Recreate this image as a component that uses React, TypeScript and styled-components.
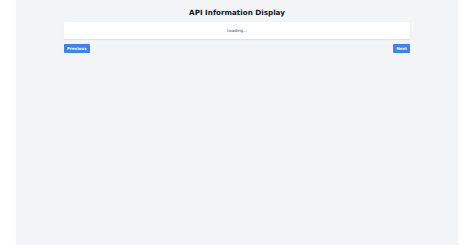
import React, { useState } from 'react';
import styled, { createGlobalStyle } from 'styled-components';

const GlobalStyle = createGlobalStyle`
  body {
    margin: 0;
    background: #ffffff;
    font-family: "DejaVu Sans", sans-serif;
  }
`;

const Page = styled.div`
  width: 442px;
  min-height: 245px;
  margin: 0 auto;
  box-sizing: border-box;
  padding: 7px 48px;
  background: #f3f4f6;
  box-shadow: 0 1px 2px rgba(0, 0, 0, 0.04);
`;

const Title = styled.h1`
  margin: 0 0 5px;
  font-size: 7.2px;
  line-height: 9px;
  padding-top: 1px;
  font-weight: 700;
  text-align: center;
  color: #111827;
`;

const Card = styled.div`
  background: #ffffff;
  border-radius: 1px;
  box-shadow: 0 1px 1px rgba(0, 0, 0, 0.08);
  height: 17px;
  display: flex;
  align-items: center;
  justify-content: center;
`;

const Status = styled.p`
  margin: 0;
  font-size: 4px;
  color: #374151;
`;

const Controls = styled.div`
  display: flex;
  justify-content: space-between;
  margin-top: 5px;
`;

const NavButton = styled.button`
  height: 9px;
  padding: 0 3px;
  border: none;
  border-radius: 1px;
  background: #3b82f6;
  color: #ffffff;
  font-family: "DejaVu Sans", sans-serif;
  font-size: 4px;
  font-weight: 700;
  cursor: pointer;
`;

export default function App() {
  const [page, setPage] = useState(1);

  return (
    <>
      <GlobalStyle />
      <Page>
        <Title>API Information Display</Title>
        <Card>
          <Status>Loading...</Status>
        </Card>
        <Controls>
          <NavButton onClick={() => setPage(Math.max(1, page - 1))}>Previous</NavButton>
          <NavButton onClick={() => setPage(page + 1)}>Next</NavButton>
        </Controls>
      </Page>
    </>
  );
}
